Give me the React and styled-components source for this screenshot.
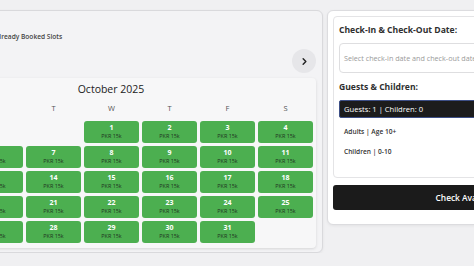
import React from "react";
import styled, { createGlobalStyle } from "styled-components";

const Global = createGlobalStyle`
  html, body { margin: 0; padding: 0; background: #f0f0f2; overflow: hidden; }
  body { font-family: "Open Sans", "Noto Sans", sans-serif; color: #2b2b2b; }
  * { box-sizing: border-box; }
`;

const Page = styled.div`
  display: flex;
  align-items: flex-start;
  gap: 4px;
  padding-top: 10px;
  margin-left: -101px;
  width: 760px;
`;

const LeftPanel = styled.section`
  width: 424px;
  flex: none;
  background: #f3f3f5;
  border: 1px solid #d9d9dc;
  border-radius: 6px;
  padding: 20px 6px 4px 6px;
  box-shadow: 0 1px 3px rgba(0,0,0,0.06);
`;

const Legend = styled.div`
  display: flex;
  align-items: center;
  gap: 10px;
  height: 10px;
  padding-left: 9px;
`;

const LegendItem = styled.span`
  display: flex;
  align-items: center;
  gap: 4px;
  font-size: 6.6px;
  font-weight: 600;
  color: #444;
  white-space: nowrap;
`;

const Swatch = styled.i`
  width: 8px;
  height: 8px;
  border-radius: 2px;
  background: ${p => p.$c};
`;

const NavRow = styled.div`
  display: flex;
  justify-content: space-between;
  align-items: center;
  margin-top: 8px;
`;

const NavButton = styled.button`
  width: 24px;
  height: 24px;
  border-radius: 50%;
  border: none;
  background: #e6e6e9;
  display: flex;
  align-items: center;
  justify-content: center;
  padding: 0;
`;

const Card = styled.div`
  margin-top: 5px;
  background: #f7f7f8;
  border-radius: 4px;
  padding: 4px 4px 5px 4px;
  box-shadow: 0 1px 3px rgba(0,0,0,0.12);
`;

const MonthTitle = styled.div`
  text-align: center;
  font-size: 10.5px;
  line-height: 14px;
  font-weight: 500;
  color: #222;
`;

const Grid = styled.div`
  display: grid;
  grid-template-columns: repeat(7, 55px);
  column-gap: 3px;
  row-gap: 3px;
`;

const Heads = styled(Grid)`
  margin-top: 6px;
  margin-bottom: 7px;
`;

const Head = styled.div`
  text-align: center;
  font-size: 7.5px;
  line-height: 12px;
  color: #555;
`;

const Day = styled.div`
  height: 22px;
  border-radius: 3px;
  background: ${p => (p.$empty ? "transparent" : "#4caf50")};
  display: flex;
  flex-direction: column;
  align-items: center;
  justify-content: center;
  gap: 1px;
`;

const DayNum = styled.span`
  font-size: 7px;
  line-height: 8px;
  font-weight: 700;
  color: #fff;
`;

const Price = styled.span`
  font-size: 5.4px;
  line-height: 7px;
  color: #1f3320;
`;

const RightPanel = styled.section`
  width: 288px;
  flex: none;
  background: #fff;
  border: 1px solid #dcdcdf;
  border-radius: 6px;
  padding: 5px 5px 14px 5px;
  box-shadow: 0 1px 3px rgba(0,0,0,0.06);
`;

const FormCard = styled.div`
  border: 1px solid #e4e4e6;
  border-radius: 4px;
  padding: 7px 8px 16px 5px;
`;

const Label = styled.div`
  font-size: 8.6px;
  line-height: 12px;
  font-weight: 700;
  color: #2f2f2f;
  margin-top: ${p => p.$mt || 0}px;
`;

const DateInput = styled.div`
  margin-top: 7px;
  height: 30px;
  border: 1px solid #dedee0;
  border-radius: 4px;
  display: flex;
  align-items: center;
  padding-left: 4px;
  font-size: 7.2px;
  color: #9a9a9a;
  white-space: nowrap;
  overflow: hidden;
`;

const Select = styled.div`
  margin-top: 7px;
  height: 18px;
  background: #1c1c1c;
  border: 1px solid #3d4f86;
  border-radius: 2px;
  display: flex;
  align-items: center;
  padding-left: 4px;
  font-size: 7.6px;
  color: #fff;
`;

const Options = styled.div`
  margin-top: 3px;
  display: flex;
  flex-direction: column;
`;

const Option = styled.div`
  height: 20px;
  display: flex;
  align-items: center;
  padding-left: 5px;
  font-size: 6.6px;
  font-weight: 600;
  color: #333;
`;

const CheckButton = styled.button`
  margin-top: 7px;
  width: 100%;
  height: 25px;
  border: none;
  border-radius: 3px;
  background: #1b1b1b;
  color: #fff;
  font-family: inherit;
  font-size: 8.4px;
  font-weight: 600;
`;

const Chevron = ({ dir = "right" }) => (
  <svg width="9" height="9" viewBox="0 0 10 10">
    <path
      d={dir === "right" ? "M3.5 2 L6.5 5 L3.5 8" : "M6.5 2 L3.5 5 L6.5 8"}
      fill="none"
      stroke="#222"
      strokeWidth="1.6"
      strokeLinecap="round"
      strokeLinejoin="round"
    />
  </svg>
);

const heads = ["S", "M", "T", "W", "T", "F", "S"];
const cells = [null, null, null, ...Array.from({ length: 31 }, (_, i) => i + 1)];

export default function App() {
  return (
    <>
      <Global />
      <Page>
        <LeftPanel>
          <Legend>
            <LegendItem><Swatch $c="#4caf50" />Available Slots</LegendItem>
            <LegendItem><Swatch $c="#bdbdbd" />Already Booked Slots</LegendItem>
          </Legend>
          <NavRow>
            <NavButton aria-label="Previous month"><Chevron dir="left" /></NavButton>
            <NavButton aria-label="Next month"><Chevron /></NavButton>
          </NavRow>
          <Card>
            <MonthTitle>October 2025</MonthTitle>
            <Heads>
              {heads.map((h, i) => <Head key={i}>{h}</Head>)}
            </Heads>
            <Grid>
              {cells.map((d, i) =>
                d === null ? (
                  <Day key={i} $empty />
                ) : (
                  <Day key={i}>
                    <DayNum>{d}</DayNum>
                    <Price>PKR 15k</Price>
                  </Day>
                )
              )}
            </Grid>
          </Card>
        </LeftPanel>
        <RightPanel>
          <FormCard>
            <Label>Check-In &amp; Check-Out Date:</Label>
            <DateInput>Select check-in date and check-out date</DateInput>
            <Label $mt={8}>Guests &amp; Children:</Label>
            <Select>Guests: 1 | Children: 0</Select>
            <Options>
              <Option>Adults | Age 10+</Option>
              <Option>Children | 0-10</Option>
            </Options>
          </FormCard>
          <CheckButton>Check Availability</CheckButton>
        </RightPanel>
      </Page>
    </>
  );
}
